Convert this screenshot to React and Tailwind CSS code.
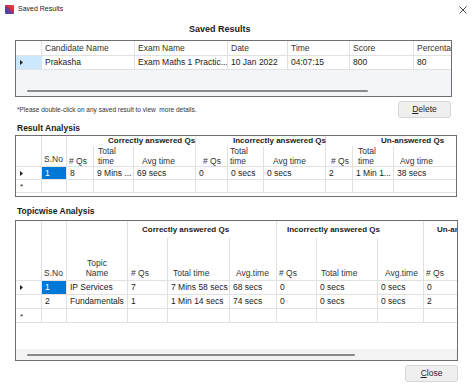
import React from "react";

const LINE = "border-[#e1e1e1]";

function AppIcon() {
  return (
    <svg width="9" height="9" viewBox="0 0 9 9" className="ml-[5px] shrink-0">
      <defs>
        <linearGradient id="ic" x1="0" y1="1" x2="1" y2="0">
          <stop offset="0" stopColor="#2c4fb3" />
          <stop offset="0.45" stopColor="#6a3d8f" />
          <stop offset="0.6" stopColor="#d8303c" />
          <stop offset="1" stopColor="#e8454c" />
        </linearGradient>
      </defs>
      <rect x="0" y="0" width="9" height="9" rx="1" fill="url(#ic)" />
    </svg>
  );
}

function RowMark({ kind, sel }) {
  return (
    <div className={`w-[26px] shrink-0 h-full border-r ${LINE} flex items-center ${sel ? "bg-[#cce8ff]" : ""}`}>
      {kind === "tri" && (
        <svg width="3" height="5" viewBox="0 0 3 5" className="ml-[4px]">
          <path d="M0 0 L3 2.5 L0 5 Z" fill="#222" />
        </svg>
      )}
      {kind === "new" && <span className="ml-[4px] text-[8px] leading-[8px] pt-[2px]">*</span>}
    </div>
  );
}

function Cell({ w, pl = "pl-[3px]", sel, last, children }) {
  return (
    <div
      className={`${w} shrink-0 h-full ${last ? "" : `border-r ${LINE}`} ${pl} flex items-center overflow-hidden whitespace-nowrap ${
        sel ? "bg-[#0078d7] text-white" : ""
      }`}
    >
      {children}
    </div>
  );
}

function Button({ children }) {
  return (
    <button className="w-[53px] h-[17px] bg-[#efefef] border border-[#d6d6d6] rounded-[3px] text-[8.5px] text-[#1f1f1f] flex items-center justify-center">
      {children}
    </button>
  );
}

// header column, label sits at the bottom
function HCol({ w, pl = "pl-[3px]", last, center, children }) {
  return (
    <div
      className={`${w} shrink-0 h-full ${last ? "" : `border-r ${LINE}`} ${pl} pb-[2px] flex flex-col justify-end ${
        center ? "items-center" : ""
      } leading-[10px] whitespace-nowrap`}
    >
      {children}
    </div>
  );
}

function Group({ w, label, pl, lh, cols, last }) {
  return (
    <div className={`${w} shrink-0 h-full flex flex-col ${last ? "" : `border-r ${LINE}`}`}>
      <div className={`${lh} ${pl} flex items-center font-bold text-[8px] whitespace-nowrap text-[#1a1a1a] relative z-10`}>
        {label}
      </div>
      <div className="flex-1 flex">
        {cols.map((c, i) => (
          <HCol key={i} w={c.w} pl={c.pl} last={i === cols.length - 1}>
            {c.h}
          </HCol>
        ))}
      </div>
    </div>
  );
}

const t1Cols = [
  { w: "w-[93px]", h: "Candidate Name", v: "Prakasha" },
  { w: "w-[93px]", h: "Exam Name", v: "Exam Maths 1 Practic..." },
  { w: "w-[60px]", h: "Date", v: "10 Jan 2022" },
  { w: "w-[62px]", h: "Time", v: "04:07:15" },
  { w: "w-[64px]", h: "Score", v: "800" },
  { w: "w-[80px]", h: "Percentage", v: "80" },
];

const t2Groups = [
  {
    w: "w-[129px]",
    label: "Correctly answered Qs",
    pl: "pl-[41px]",
    cols: [
      { w: "w-[27px]", pl: "pl-[2px]", h: "# Qs" },
      { w: "w-[40px]", pl: "pl-[4px]", h: (<><span>Total</span><span>time</span></>) },
      { w: "w-[62px]", pl: "pl-[8px]", h: "Avg time" },
    ],
  },
  {
    w: "w-[130px]",
    label: "Incorrectly answered Qs",
    pl: "pl-[37px]",
    cols: [
      { w: "w-[32px]", pl: "pl-[7px]", h: "# Qs" },
      { w: "w-[36px]", pl: "pl-[2px]", h: (<><span>Total</span><span>time</span></>) },
      { w: "w-[62px]", pl: "pl-[9px]", h: "Avg time" },
    ],
  },
  {
    w: "w-[130px]",
    label: "Un-answered Qs",
    pl: "pl-[55px]",
    cols: [
      { w: "w-[27px]", pl: "pl-[5px]", h: "# Qs" },
      { w: "w-[41px]", pl: "pl-[5px]", h: (<><span>Total</span><span>time</span></>) },
      { w: "w-[62px]", pl: "pl-[6px]", h: "Avg time" },
    ],
  },
];

const t2Data = [
  { w: "w-[27px]", v: "8" },
  { w: "w-[40px]", v: "9 Mins ..." },
  { w: "w-[62px]", v: "69 secs" },
  { w: "w-[32px]", v: "0" },
  { w: "w-[36px]", v: "0 secs" },
  { w: "w-[62px]", v: "0 secs" },
  { w: "w-[27px]", v: "2" },
  { w: "w-[41px]", v: "1 Min 1..." },
  { w: "w-[62px]", v: "38 secs" },
];

const t3Groups = [
  {
    w: "w-[149px]",
    label: "Correctly answered Qs",
    pl: "pl-[14px]",
    cols: [
      { w: "w-[40px]", pl: "pl-[3px]", h: "# Qs" },
      { w: "w-[62px]", pl: "pl-[5px]", h: "Total time" },
      { w: "w-[47px]", pl: "pl-[6px]", h: "Avg.time" },
    ],
  },
  {
    w: "w-[147px]",
    label: "Incorrectly answered Qs",
    pl: "pl-[10px]",
    cols: [
      { w: "w-[40px]", pl: "pl-[2px]", h: "# Qs" },
      { w: "w-[61px]", pl: "pl-[4px]", h: "Total time" },
      { w: "w-[46px]", pl: "pl-[7px]", h: "Avg.time" },
    ],
  },
  {
    w: "w-[160px]",
    label: "Un-answered Qs",
    pl: "pl-[13px]",
    cols: [
      { w: "w-[40px]", pl: "pl-[2px]", h: "# Qs" },
      { w: "w-[60px]", pl: "pl-[4px]", h: "Total time" },
      { w: "w-[60px]", pl: "pl-[7px]", h: "Avg.time" },
    ],
  },
];

const t3Widths = ["w-[40px]", "w-[62px]", "w-[47px]", "w-[40px]", "w-[61px]", "w-[46px]", "w-[40px]", "w-[60px]", "w-[60px]"];

const topics = [
  { n: "1", name: "IP Services", vals: ["7", "7 Mins 58 secs", "68 secs", "0", "0 secs", "0 secs", "0", "", ""] },
  { n: "2", name: "Fundamentals", vals: ["1", "1 Min 14 secs", "74 secs", "0", "0 secs", "0 secs", "2", "", ""] },
];

export default function App() {
  return (
    <div className="w-[474px] h-[388px] bg-white overflow-hidden font-['Liberation_Sans',Arial,sans-serif] text-[#1a1a1a] text-[8.5px]">
      {/* title bar */}
      <div className="h-[19px] flex items-center">
        <AppIcon />
        <span className="ml-[4px] text-[7px] text-[#222]">Saved Results</span>
        <svg width="8" height="8" viewBox="0 0 8 8" className="ml-auto mr-[7px]">
          <path d="M0.5 0.5 L7.5 7.5 M7.5 0.5 L0.5 7.5" stroke="#333" strokeWidth="0.9" />
        </svg>
      </div>

      <div className="h-[21px] pl-[189px] flex items-center font-bold text-[9px]">Saved Results</div>

      {/* saved results grid */}
      <div className="ml-[15px] w-[437px] h-[57px] border border-[#6f6f6f] bg-[#f4f5f8] overflow-hidden flex flex-col">
        <div className={`flex h-[15px] shrink-0 bg-white border-b ${LINE} text-[#333]`}>
          <RowMark />
          {t1Cols.map((c, i) => (
            <Cell key={i} w={c.w} last={i === t1Cols.length - 1}>
              {c.h}
            </Cell>
          ))}
        </div>
        <div className={`flex h-[14px] shrink-0 bg-white border-b ${LINE}`}>
          <RowMark kind="tri" sel />
          {t1Cols.map((c, i) => (
            <Cell key={i} w={c.w} last={i === t1Cols.length - 1}>
              {c.v}
            </Cell>
          ))}
        </div>
        <div className="flex-1 flex flex-col justify-end pb-[4px]">
          <div className="ml-[11px] w-[341px] h-[2px] rounded-full bg-[#8a8a8a]" />
        </div>
      </div>

      <div className="h-[24px] flex items-start">
        <div className="ml-[17px] mt-[9px] text-[6.5px] leading-[8px] text-[#333]">
          *Please double-click on any saved result to view&nbsp; more details.
        </div>
        <div className="ml-auto mr-[23px] mt-[4px]">
          <Button>
            <span className="underline">D</span>elete
          </Button>
        </div>
      </div>

      <div className="h-[14px] pl-[17px] flex items-center font-bold text-[8.5px]">Result Analysis</div>

      {/* result analysis grid */}
      <div className="ml-[15px] w-[442px] h-[62px] border border-[#6f6f6f] bg-white overflow-hidden flex flex-col">
        <div className={`flex h-[31px] shrink-0 border-b ${LINE} text-[#333]`}>
          <HCol w="w-[26px]" />
          <HCol w="w-[25px]" pl="pl-[2px]">S.No</HCol>
          {t2Groups.map((g, i) => (
            <Group key={i} {...g} lh="h-[10px]" last={i === t2Groups.length - 1} />
          ))}
        </div>
        <div className={`flex h-[13px] shrink-0 border-b ${LINE}`}>
          <RowMark kind="tri" />
          <Cell w="w-[25px]" sel>1</Cell>
          {t2Data.map((c, i) => (
            <Cell key={i} w={c.w} last={i === t2Data.length - 1}>
              {c.v}
            </Cell>
          ))}
        </div>
        <div className={`flex h-[13px] shrink-0 border-b ${LINE}`}>
          <RowMark kind="new" />
          <Cell w="w-[25px]" />
          {t2Data.map((c, i) => (
            <Cell key={i} w={c.w} last={i === t2Data.length - 1} />
          ))}
        </div>
      </div>

      <div className="h-[23px] pl-[17px] pt-[9px] font-bold text-[8.5px] leading-[10px]">Topicwise Analysis</div>

      {/* topicwise grid */}
      <div className="ml-[15px] w-[443px] h-[141px] border border-[#6f6f6f] bg-white overflow-hidden flex flex-col">
        <div className={`flex h-[60px] shrink-0 border-b ${LINE} text-[#333]`}>
          <HCol w="w-[26px]" />
          <HCol w="w-[25px]" pl="pl-[2px]">S.No</HCol>
          <HCol w="w-[61px]" pl="pl-[0px]" center>
            <span>Topic</span>
            <span>Name</span>
          </HCol>
          {t3Groups.map((g, i) => (
            <Group key={i} {...g} lh="h-[17px]" last={i === t3Groups.length - 1} />
          ))}
        </div>
        {topics.map((t, r) => (
          <div key={r} className={`flex h-[14px] shrink-0 border-b ${LINE}`}>
            <RowMark kind={r === 0 ? "tri" : undefined} />
            <Cell w="w-[25px]" sel={r === 0}>{t.n}</Cell>
            <Cell w="w-[61px]">{t.name}</Cell>
            {t.vals.map((v, i) => (
              <Cell key={i} w={t3Widths[i]}>{v}</Cell>
            ))}
          </div>
        ))}
        <div className={`flex h-[14px] shrink-0 border-b ${LINE}`}>
          <RowMark kind="new" />
          <Cell w="w-[25px]" />
          <Cell w="w-[61px]" />
          {t3Widths.map((w, i) => (
            <Cell key={i} w={w} />
          ))}
        </div>
        <div className="flex-1 flex flex-col justify-end">
          <div className="h-[11px] bg-[#f3f3f3] flex items-center">
            <div className="ml-[11px] w-[328px] h-[2px] rounded-full bg-[#8a8a8a]" />
          </div>
        </div>
      </div>

      <div className="flex justify-end mr-[16px] mt-[4px]">
        <Button>
          <span className="underline">C</span>lose
        </Button>
      </div>
    </div>
  );
}
